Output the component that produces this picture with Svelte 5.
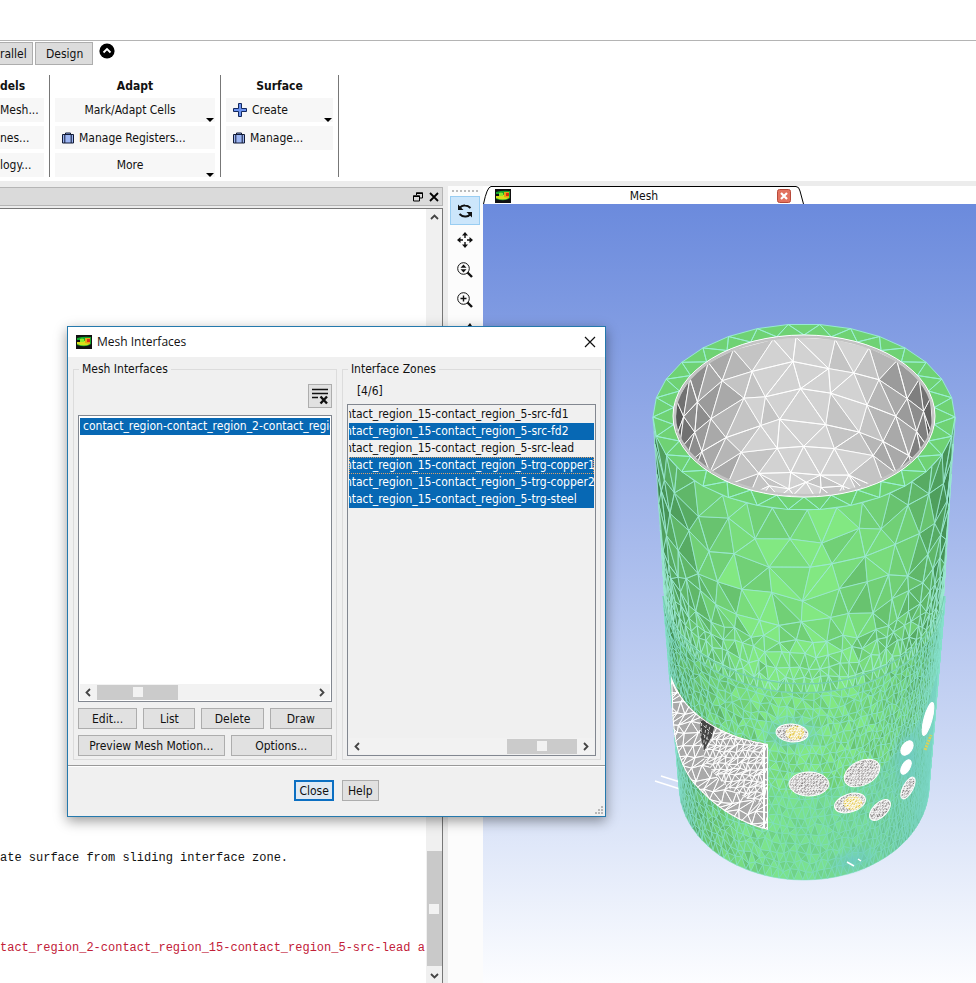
<script>
  const zones = [
    { name: 'ntact_region_15-contact_region_5-src-fd1', on: false },
    { name: 'ntact_region_15-contact_region_5-src-fd2', on: true },
    { name: 'ntact_region_15-contact_region_5-src-lead', on: false },
    { name: 'ntact_region_15-contact_region_5-trg-copper1', on: true, focus: true },
    { name: 'ntact_region_15-contact_region_5-trg-copper2', on: true },
    { name: 'ntact_region_15-contact_region_5-trg-steel', on: true }
  ];

  let seed = 7;
  const rnd = () => {
    seed = (seed * 16807) % 2147483647;
    return seed / 2147483647;
  };
  const mix = (a, b, t) => a.map((v, i) => Math.round(v + (b[i] - v) * t));
  const tri = (a, b, c) =>
    `M${a[0].toFixed(1)} ${a[1].toFixed(1)}L${b[0].toFixed(1)} ${b[1].toFixed(1)} ${c[0].toFixed(1)} ${c[1].toFixed(1)}Z`;

  // Triangulates the strips between neighbouring rows and groups the facets by shade.
  function strips(rows, shade, ramp) {
    const groups = {};
    const add = (a, b, c) => {
      const t = Math.max(0, Math.min(1, shade((a[2] + b[2] + c[2]) / 3)));
      const k = Math.round(t * 11);
      groups[k] = (groups[k] || '') + tri(a, b, c);
    };
    for (let r = 0; r < rows.length - 1; r++) {
      const p = rows[r];
      const q = rows[r + 1];
      let i = 0;
      let j = 0;
      while (i < p.length - 1 || j < q.length - 1) {
        if (j >= q.length - 1 || (i < p.length - 1 && p[i + 1][2] <= q[j + 1][2])) {
          add(p[i], p[i + 1], q[j]);
          i++;
        } else {
          add(p[i], q[j + 1], q[j]);
          j++;
        }
      }
    }
    return Object.entries(groups).map(([k, d]) => ({
      d,
      fill: `rgb(${mix(ramp[0], ramp[1], k / 11).join(',')})`
    }));
  }

  const H = Math.PI / 2;
  function wall(levels, radius, depth, warp) {
    return levels.map(([y, n], r) => {
      const row = [];
      const last = r === 0 || r === levels.length - 1;
      for (let i = 0; i <= n; i++) {
        let t = -1 + (2 * (i + (r % 2 && i > 0 && i < n ? 0.5 : 0))) / n;
        const edge = i === 0 || i === n;
        if (!edge) t += ((rnd() - 0.5) * 0.9) / n;
        t = Math.max(-1, Math.min(1, t));
        if (warp) t = t + warp * (1 - t * t);
        const a = t * H;
        const gap = levels[r + 1] ? levels[r + 1][0] - y : 6;
        const yy = y + (last || edge ? 0 : (rnd() - 0.5) * gap * 0.55);
        row.push([804 + radius(yy) * Math.sin(a), yy + depth * Math.cos(a), a]);
      }
      row.sort((m, o) => m[2] - o[2]);
      return row;
    });
  }

  const ramp = [[36, 98, 62], [130, 232, 130]];
  const greenShade = (a) => Math.pow(Math.cos(a * 0.97), 0.75) * 0.93 + (rnd() - 0.5) * 0.26;
  const upper = strips(
    wall([[417, 16], [444, 14], [474, 14], [504, 15], [530, 20], [548, 28], [562, 36], [574, 42], [587, 50], [600, 58]], (y) => 151 - (y - 417) * 0.065, 93, 0),
    greenShade, ramp);
  const lowLevels = [[596, 50], [605, 54], [614, 58], [624, 60]];
  for (let y = 633; y < 780; y += 9) lowLevels.push([y, 66]);
  lowLevels.push([786, 66]);
  const lower = strips(wall(lowLevels, (y) => 141 - (y - 596) * 0.085, 94, 0.3), greenShade, ramp);

  // Annular top face between the outer and the bore edges.
  const rim = (() => {
    let d = '';
    const n = 30;
    const o = (i) => [804 + 151 * Math.cos((i / n) * 4 * H), 417 + 93 * Math.sin((i / n) * 4 * H)];
    const q = (i) => [804 + 131 * Math.cos((i / n) * 4 * H), 416 + 81 * Math.sin((i / n) * 4 * H)];
    for (let i = 0; i < n; i++) d += tri(o(i), o(i + 1), q(i + 0.5)) + tri(q(i - 0.5), q(i + 0.5), o(i));
    return d;
  })();

  const bore = strips(
    [0, 27, 56, 84, 110, 134, 148, 160, 170].map((dy, r) => {
      const n = r > 5 ? 22 : 12;
      const row = [];
      for (let i = 0; i <= n; i++) {
        const a = Math.max(-H, Math.min(H, (-1 + (2 * (i + (r % 2) * 0.5 + (rnd() - 0.5) * 0.5)) / n) * H));
        row.push([804 + 130 * Math.sin(a), 416 - 79 * Math.cos(a) + dy + (r ? (rnd() - 0.5) * 9 : 0), a]);
      }
      row[0] = [674, 416 + dy, -H];
      row[n] = [934, 416 + dy, H];
      return row.sort((m, o) => m[2] - o[2]);
    }),
    (a) => Math.cos(a) * 1.02 + (rnd() - 0.5) * 0.14, [[58, 58, 58], [210, 210, 210]]);

  // Flat patch of facets, clipped to a cut-out.
  function patch(x0, y0, x1, y1, s) {
    const rows = [];
    for (let y = y0, r = 0; y <= y1 + s; y += s, r++) {
      const row = [];
      for (let x = x0 - s; x <= x1 + s; x += s) {
        const px = x + (r % 2) * s * 0.5 + (rnd() - 0.5) * s * 0.5;
        row.push([px, y + (rnd() - 0.5) * s * 0.5, px]);
      }
      rows.push(row);
    }
    return rows.slice(1).map((q, k) => q.slice(1).map((c, i) => tri(rows[k][i], rows[k][i + 1], q[i]) + tri(rows[k][i + 1], c, q[i])).join('')).join('');
  }
  const plateMesh = patch(670, 680, 770, 832, 11);
  const fineMesh = patch(700, 715, 768, 805, 6);
  const holeMesh = patch(770, 700, 940, 830, 3);
  const holes = [
    [792, 733, 16, 9, 5, 1], [809, 784, 20, 12, 0, 0], [862, 773, 19, 12, -28, 0],
    [850, 803, 16, 9, -18, 1], [880, 810, 13, 7, -45, 0], [908, 788, 12, 5, -62, 0],
    [907, 748, 8, 5, -55, 2], [906, 767, 8, 4, -60, 2], [928, 719, 17, 4, -75, 2]
  ];
</script>

{#snippet appIcon()}
  <svg class="app-icon" viewBox="0 0 16 14" aria-hidden="true">
    <rect width="16" height="14" fill="#111" />
    <path d="M1 3Q8 1 15 2V9Q10 13 1 10Z" fill="#12a72b" />
    <path d="M1 7Q7 5 14 6V9Q8 12 1 9Z" fill="#d9e01a" />
    <path d="M9 3L14 3V9L9 8Z" fill="#e8a313" />
    <path d="M4 4Q6 3 8 4V7H4Z" fill="#8ce82a" />
    <path d="M11 4H14V7H11Z" fill="#e02a14" />
    <path d="M1 5H4V7H1Z" fill="#111" />
  </svg>
{/snippet}

{#snippet bag()}
  <svg class="ico" width="12" height="12" viewBox="0 0 12 12" aria-hidden="true">
    <path d="M3.5 2.5V1H8.5V2.5M.5 2.5H11.5V11H.5ZM2.8 2.5V11M9.2 2.5V11" fill="#9db6f3" stroke="#111a36" />
  </svg>
{/snippet}

{#snippet arrow(dir)}
  <svg class="arrow" width="9" height="9" viewBox="0 0 9 9" aria-hidden="true">
    <path d="M6 1L2.5 4.5 6 8" fill="none" stroke="#444" stroke-width="1.8" transform={`rotate(${dir} 4.5 4.5)`} />
  </svg>
{/snippet}

<div class="app">
  <header>
    <div class="caption-space"></div>
    <nav class="tabs">
      <button class="tab cut">rallel</button>
      <button class="tab">Design</button>
      <button class="collapse" aria-label="Collapse ribbon">
        <svg width="16" height="16" viewBox="0 0 16 16"><circle cx="8" cy="8" r="7.6" /><path d="M4.5 9.5L8 6l3.5 3.5" fill="none" stroke="#fff" stroke-width="1.8" /></svg>
      </button>
    </nav>
    <div class="ribbon">
      <section class="group models">
        <h2>dels</h2>
        <button>Mesh...</button>
        <button class="p1">nes...</button>
        <button class="p2">logy...</button>
      </section>
      <section class="group adapt">
        <h2>Adapt</h2>
        <button class="menu">Mark/Adapt Cells</button>
        <button class="left">{@render bag()}Manage Registers...</button>
        <button class="menu">More</button>
      </section>
      <section class="group surface">
        <h2>Surface</h2>
        <button class="left menu">
          <svg class="ico" width="14" height="14" viewBox="0 0 14 14" aria-hidden="true"><path d="M5.5.5h3v5h5v3h-5v5h-3v-5h-5v-3h5z" fill="#6c93ef" stroke="#14285e" /></svg>Create
        </button>
        <button class="left">{@render bag()}Manage...</button>
      </section>
    </div>
  </header>

  <main>
    <section class="console">
      <div class="dock">
        <button aria-label="Float"><svg width="10" height="10" viewBox="0 0 10 10"><path d="M3.5 3V1h6v5H7M.5 4h6v5h-6z" fill="none" stroke="#000" /><path d="M3 1.2h7M0 4.2h7" stroke="#000" stroke-width="1.6" /></svg></button>
        <button aria-label="Close console"><svg width="10" height="10" viewBox="0 0 10 10"><path d="M1 1l8 8M9 1L1 9" stroke="#000" stroke-width="1.8" /></svg></button>
      </div>
      <div class="output">
        <div class="log">
          <p>ate surface from sliding interface zone.</p>
          <p class="error">tact_region_2-contact_region_15-contact_region_5-src-lead alr</p>
        </div>
        <div class="vbar">
          {@render arrow(90)}
          <div class="vthumb"><i></i></div>
          {@render arrow(270)}
        </div>
      </div>
    </section>
    <div class="split"></div>
    <div class="tools">
      <div class="grip"></div>
      <button class="active" aria-label="Rotate">
        <svg width="18" height="18" viewBox="0 0 18 18"><path d="M3.500 6Q6 3 9 3.500q3 0 5.500 2.500M14.500 12q-2.500 3-5.500 2.500-3 0-5.500-2.500" fill="none" stroke="#111" stroke-width="2" /><path d="M2 2.500V8H7.500zM16 15.500V10H10.500z" fill="#111" /></svg>
      </button>
      <button aria-label="Pan">
        <svg width="16" height="16" viewBox="0 0 16 16"><path d="M8 2v4M8 10v4M2 8h4M10 8h4" stroke="#111" stroke-width="1.4" /><path d="M8 0l3 3.500H5zM8 16l3-3.500H5zM0 8l3.500-3v6zM16 8l-3.500-3v6z" fill="#111" /></svg>
      </button>
      <button aria-label="Zoom">
        <svg width="16" height="16" viewBox="0 0 16 16"><circle cx="6.500" cy="6.500" r="5.800" fill="none" stroke="#111" /><path d="M10.500 10.500L15 15" stroke="#111" stroke-width="2.400" /><path d="M6.500 2.500l3 3.200h-6zM6.500 10.500l3-3.200h-6z" fill="#111" /></svg>
      </button>
      <button aria-label="Zoom in">
        <svg width="16" height="16" viewBox="0 0 16 16"><circle cx="6.500" cy="6.500" r="5.800" fill="none" stroke="#111" /><path d="M10.500 10.500L15 15" stroke="#111" stroke-width="2.400" /><path d="M6.500 3.500v6M3.500 6.500h6" stroke="#111" stroke-width="1.400" /></svg>
      </button>
      <button aria-label="Probe">
        <svg width="16" height="16" viewBox="0 0 16 16"><path d="M13 1L4 12l-2 3 3-2L15 4z" fill="#111" /></svg>
      </button>
    </div>
    <section class="view">
      <div class="view-tabs">
        <svg class="edge" width="8" height="18" viewBox="0 0 8 18" aria-hidden="true"><path d="M.5 18Q4 1 8 .500" fill="#fff" stroke="#000" /></svg>
        <div class="view-tab">
          {@render appIcon()}
          <span>Mesh</span>
          <button class="x" aria-label="Close tab"><svg width="14" height="14" viewBox="0 0 14 14"><rect x=".5" y=".5" width="13" height="13" rx="2" fill="#e2725f" stroke="#b84a3a" /><path d="M4 4l6 6M10 4l-6 6" stroke="#fff" stroke-width="2.200" /></svg></button>
        </div>
        <svg class="edge" width="8" height="18" viewBox="0 0 8 18" aria-hidden="true"><path d="M0 .500Q3 .500 4 5L7.500 18" fill="none" stroke="#000" /></svg>
      </div>
      <svg class="model" viewBox="483 204 493 779" preserveAspectRatio="xMinYMin slice" role="img" aria-label="Cylinder mesh">
        <defs>
          <clipPath id="bore"><ellipse cx="804" cy="416" rx="130" ry="80" /></clipPath>
          <clipPath id="plate"><path d="M671 676Q680 702 702 718Q728 738 768 744V830Q728 820 700 790Q672 765 672 700Z" /></clipPath>
          <clipPath id="recess"><path d="M700 716Q728 738 764 743V804Q724 795 704 758Z" /></clipPath>
          <clipPath id="holes">
            {#each holes as h}<ellipse cx={h[0]} cy={h[1]} rx={h[2]} ry={h[3]} transform={`rotate(${h[4]} ${h[0]} ${h[1]})`} />{/each}
          </clipPath>
          <radialGradient id="glow"><stop offset="0" stop-color="#6fcbc4" stop-opacity=".9" /><stop offset="1" stop-color="#6fcbc4" stop-opacity="0" /></radialGradient>
          <linearGradient id="edge"><stop offset="0" stop-color="#7cd0c4" stop-opacity=".4" /><stop offset=".14" stop-color="#70d8b0" stop-opacity="0" /><stop offset=".4" stop-color="#6cd8a0" stop-opacity=".35" /><stop offset="1" stop-color="#72cdc0" stop-opacity=".6" /></linearGradient>
        </defs>
        <path d="M655 781L680 789M661 776L680 782" stroke="#fff" stroke-width="1.600" />
        <g stroke="#86e0cc" stroke-width=".6" stroke-linejoin="round">
          {#each lower as g}<path d={g.d} fill={g.fill} />{/each}
        </g>
        <path d="M675 700Q695 785 804 795Q910 785 938 670L929 786A125 94 0 0 1 679 786Z" fill="url(#edge)" />
        <g stroke="#9be8d2" stroke-width=".8" stroke-linejoin="round">
          {#each upper as g}<path d={g.d} fill={g.fill} />{/each}
        </g>
        <path d="M663 596A141 96 0 0 0 944 596M666 610A139 94 0 0 0 942 610" fill="none" stroke="#76cfae" stroke-width="1.200" />
        <path d={rim} fill="#6fd274" stroke="#9beed6" stroke-width=".9" />
        <ellipse cx="804" cy="416" rx="131" ry="81" fill="#b8b8b8" />
        <g clip-path="url(#bore)" stroke="#fff" stroke-width=".9">
          {#each bore as g}<path d={g.d} fill={g.fill} />{/each}
        </g>
        <ellipse cx="804" cy="416" rx="129" ry="79" fill="none" stroke="#c4c4c4" stroke-width="2" />
        <ellipse cx="804" cy="416" rx="131" ry="81" fill="none" stroke="#fff" />
        <g clip-path="url(#plate)">
          <path d={plateMesh} fill="#a9a9a9" stroke="#fff" stroke-width=".9" />
          <g clip-path="url(#recess)"><path d={fineMesh} fill="#a6a6a6" stroke="#fff" stroke-width=".8" /></g>
          <path d="M701 716l14 8-3 12-8 15-4-18z" fill="#444" />
          <path d="M700 722l12 12M700 730l10 12M702 718l-2 30M707 720l-4 28M711 722l-6 24" stroke="#eee" stroke-width=".8" stroke-dasharray="3 2" />
          <path d="M671 676Q680 702 702 718Q728 738 768 744V830Q728 820 700 790Q672 765 672 700ZM764 743V828" fill="none" stroke="#fff" stroke-width="2" />
        </g>
        <ellipse cx="853" cy="860" rx="27" ry="14" fill="url(#glow)" transform="rotate(-18 853 860)" />
        <ellipse cx="792" cy="733" rx="34" ry="20" fill="url(#glow)" />
        <ellipse cx="907" cy="758" rx="16" ry="38" fill="url(#glow)" />
        {#each holes as h}
          <ellipse cx={h[0]} cy={h[1]} rx={h[2]} ry={h[3]} fill={h[5] === 2 ? '#fff' : '#858080'} stroke="#fff" transform={`rotate(${h[4]} ${h[0]} ${h[1]})`} />
          {#if h[5] === 1}<ellipse cx={h[0] + 3} cy={h[1]} rx={h[2] * 0.6} ry={h[3] * 0.8} fill="#e0c02e" />{/if}
        {/each}
        <path clip-path="url(#holes)" d={holeMesh} fill="none" stroke="#fff" stroke-width=".5" />
        <path d="M925 750l6-15" stroke="#d9d35a" stroke-width="3" stroke-dasharray="2 1" />
        <path d="M847 862l7 4M858 859l3 2" stroke="#fff" stroke-width="1.500" />
      </svg>
    </section>
  </main>

  <div class="dialog" role="dialog" aria-label="Mesh Interfaces">
    <div class="title">
      {@render appIcon()}
      <span>Mesh Interfaces</span>
      <button aria-label="Close dialog"><svg width="12" height="12" viewBox="0 0 12 12"><path d="M1 1l10 10M11 1L1 11" stroke="#111" stroke-width="1.200" /></svg></button>
    </div>
    <div class="panes">
      <fieldset class="pane-a">
        <legend>Mesh Interfaces</legend>
        <button class="filter" aria-label="Clear selection">
          <svg width="18" height="18" viewBox="0 0 18 18"><path d="M1 2.500h16M1 6.500h16M1 10.500h6" stroke="#111" stroke-width="1.500" /><path d="M9.500 9.500l6.500 7M16 9.500l-6.500 7" stroke="#111" stroke-width="2.400" /></svg>
        </button>
        <div class="listbox">
          <ul role="listbox" aria-label="Mesh Interfaces">
            <li role="option" aria-selected="true" class="on">contact_region-contact_region_2-contact_regio</li>
          </ul>
          <div class="hbar">{@render arrow(0)}<div class="track start"><div class="hthumb wide"><i></i></div></div>{@render arrow(180)}</div>
        </div>
        <div class="row four"><button>Edit...</button><button>List</button><button>Delete</button><button>Draw</button></div>
        <div class="row two"><button>Preview Mesh Motion...</button><button>Options...</button></div>
      </fieldset>
      <fieldset class="pane-b">
        <legend>Interface Zones</legend>
        <div class="count">[4/6]</div>
        <div class="listbox grey">
          <ul role="listbox" aria-multiselectable="true" aria-label="Interface Zones">
            {#each zones as z}
              <li role="option" aria-selected={z.on} class:on={z.on} class:focus={z.focus}>{z.name}</li>
            {/each}
          </ul>
          <div class="hbar">{@render arrow(0)}<div class="track end"><div class="hthumb"><i></i></div></div>{@render arrow(180)}</div>
        </div>
      </fieldset>
    </div>
    <div class="footer">
      <button class="default">Close</button>
      <button>Help</button>
      <svg class="size-grip" width="9" height="9" viewBox="0 0 9 9" aria-hidden="true"><path d="M6 0h2v2H6zM3 3h2v2H3zM6 3h2v2H6zM0 6h2v2H0zM3 6h2v2H3zM6 6h2v2H6z" fill="#b8b8b8" /></svg>
    </div>
  </div>
</div>

<style>
  :global(body) { margin: 0; }
  .app {
    position: relative;
    display: flex;
    flex-direction: column;
    height: 100vh;
    min-height: 840px;
    overflow: hidden;
    background: #fff;
    color: #111;
    font: 12px/16px "DejaVu Sans Condensed", "DejaVu Sans", sans-serif;
  }
  button { font: inherit; color: inherit; border: 0; padding: 0; background: none; white-space: nowrap; }
  svg { display: block; flex: none; }
  .caption-space { height: 40px; border-bottom: 1px solid #b4b4b4; }
  .tabs { display: flex; align-items: flex-start; gap: 2px; height: 34px; }
  .tab { height: 23px; margin-top: 1px; padding: 0 10px; background: #dcdcdc; border: 1px solid #adadad; width: 58px; }
  .tab.cut { width: 33px; box-sizing: border-box; border-left: 0; padding: 0 9px 0 0; text-align: right; }
  .collapse { margin: 2px 0 0 4px; }
  .ribbon { display: flex; height: 102px; padding-bottom: 4px; }
  .group { display: flex; flex-direction: column; gap: 4px; box-sizing: border-box; padding: 0 5px; border-right: 1px solid #777; }
  .group h2 { margin: 0; font-size: 12px; line-height: 22px; height: 19px; text-align: center; }
  .group button { position: relative; height: 24px; background: #f7f7f7; }
  .group button.left { display: flex; align-items: center; gap: 5px; padding-left: 7px; }
  .menu::after { content: ""; position: absolute; right: 1px; bottom: 0; border: 4px solid transparent; border-top-color: #000; border-bottom: 0; }
  .group.models { width: 50px; padding-left: 0; }
  .models h2 { text-align: left; }
  .models button { text-align: left; }
  .adapt { width: 171px; }
  .adapt .menu { padding-right: 10px; }
  .surface { width: 118px; }

  main {
    flex: 1;
    min-height: 0;
    display: grid;
    grid-template-columns: minmax(0, 443fr) 5px 35px minmax(0, 493fr);
    border-top: 5px solid #ececec;
  }
  .console { display: flex; flex-direction: column; min-height: 0; padding-top: 1px; background: #ececec; }
  .dock { display: flex; justify-content: flex-end; align-items: center; gap: 6px; height: 17px; padding-right: 3px; background: #dadada; border: solid #b5b5b5; border-width: 1px 1px 1px 0; }
  .output { flex: 1; min-height: 0; display: flex; margin-top: 2px; background: #fff; border: solid #777; border-width: 1px 1px 0 0; }
  .log { flex: 1; min-width: 0; overflow: hidden; display: flex; flex-direction: column; justify-content: flex-end; gap: 74px; padding-bottom: 27px; font: 12px/16px "Liberation Mono", monospace; white-space: pre; }
  .log p { margin: 0; }
  .error { color: #c22038; }
  .vbar { width: 16px; box-sizing: border-box; display: flex; flex-direction: column; align-items: center; padding: 4px 0 3px; background: #f0f0f0; }
  .vthumb { margin-top: auto; margin-bottom: 5px; width: 15px; height: 115px; background: #c9c9c9; display: grid; place-items: center; }
  i { width: 10px; height: 10px; background: #f2f2f2; }
  .split { background: #ececec; }
  .tools { display: flex; flex-direction: column; align-items: center; padding: 4px 1px 0 0; background: #fcfcfc; }
  .tools button { display: grid; place-items: center; width: 30px; height: 30px; box-sizing: border-box; }
  .tools .active { height: 29px; background: #cce6fb; border: 1px solid #99cdf2; }
  .grip { width: 26px; height: 2px; margin-bottom: 4px; background: repeating-linear-gradient(90deg, #bbb 0 2px, transparent 2px 4px); }
  .view { display: flex; flex-direction: column; min-height: 0; background: linear-gradient(#6888dc, #a3b7eb 42%, #d3def6 75%, #fcfdff); }
  .view-tabs { display: flex; height: 18px; background: #fff; }
  .view-tab { display: flex; align-items: center; width: 305px; box-sizing: border-box; border-top: 1px solid #000; padding: 0 5px 0 4px; }
  .view-tab span { flex: 1; text-align: center; }
  .app-icon { width: 16px; height: 14px; }
  .model { width: 100%; flex: 1; min-height: 0; }

  .dialog {
    position: absolute;
    left: 67px;
    top: 326px;
    width: 539px;
    box-sizing: border-box;
    border: 1px solid #2579ad;
    background: #f0f0f0;
    box-shadow: 0 4px 12px rgb(0 0 0 / 40%);
  }
  .title { display: flex; align-items: center; gap: 5px; height: 30px; padding: 0 9px 0 8px; background: #fff; font-family: "Open Sans", "Noto Sans", sans-serif; }
  .title span { flex: 1; }
  .panes { display: flex; gap: 5px; padding: 4px 4px 5px 5px; border-bottom: 1px solid #999; }
  fieldset { margin: 0; min-width: 0; box-sizing: border-box; height: 399px; padding: 0 4px 3px; border: 1px solid #dcdcdc; display: flex; flex-direction: column; }
  legend { margin-left: 1px; padding: 0 3px; line-height: 16px; }
  .pane-a { flex: 264; }
  .pane-b { flex: 259; }
  .filter { align-self: flex-end; display: grid; place-items: center; width: 24px; height: 24px; margin: 7px 0; background: #e1e1e1; border: 1px solid #adadad; }
  .listbox { flex: 1; display: flex; flex-direction: column; min-height: 0; padding: 1px; background: #fff; border: 1px solid #828790; }
  .listbox.grey { background: #f0f0f0; }
  ul { flex: 1; min-height: 0; margin: 0; padding: 1px 0 0; list-style: none; overflow: hidden; }
  .grey ul { padding-top: 0; }
  li { height: 17px; box-sizing: border-box; line-height: 17px; padding-left: 3px; white-space: nowrap; overflow: hidden; }
  .grey li { padding-left: 0; text-indent: -4px; }
  li.on { background: #0768b4; color: #fff; }
  li.focus { outline: 1px dotted #d9a06a; outline-offset: -1px; }
  .hbar { display: flex; align-items: center; height: 16px; padding: 0 4px; background: #f2f2f2; }
  .track { flex: 1; display: flex; padding: 0 4px; }
  .track.end { justify-content: flex-end; }
  .hthumb { width: 70px; height: 15px; background: #cbcbcb; display: grid; place-items: center; }
  .hthumb.wide { width: 81px; }
  .row { display: grid; gap: 6px; margin-top: 6px; }
  .row button, .footer button { height: 21px; background: #e1e1e1; border: 1px solid #adadad; box-sizing: border-box; }
  .four { grid-template-columns: 59fr 52fr 62fr 62fr; }
  .two { grid-template-columns: 146fr 101fr; }
  .count { height: 27px; padding: 6px 0 0 10px; box-sizing: border-box; }
  .footer { position: relative; display: flex; justify-content: center; gap: 8px; padding: 13px 0 15px; border-top: 1px solid #fff; }
  .footer button { padding: 0 5px; }
  .footer .default { border: 2px solid #0b6fc2; padding: 0 3px; background: #dfe9f3; }
  .size-grip { position: absolute; right: 1px; bottom: 1px; }
</style>
